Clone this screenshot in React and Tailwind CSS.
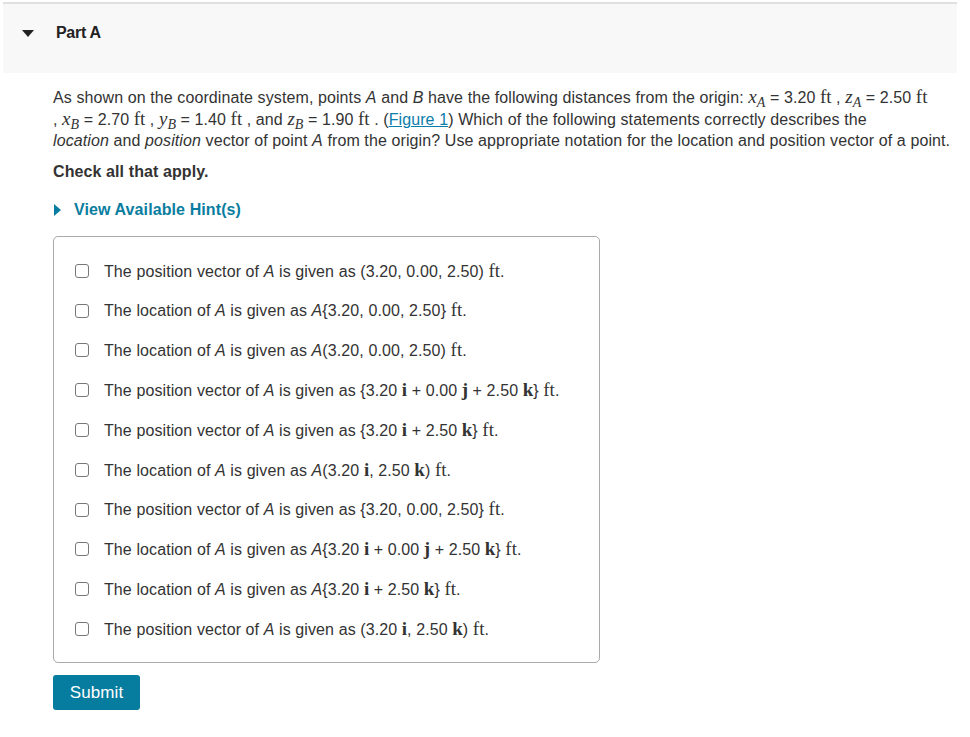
import React from 'react';

const Ft = () => <span className="font-['Liberation_Serif',serif] text-[19px] tracking-normal">ft</span>;
const V = ({ c }) => <span className="font-['Liberation_Serif',serif] font-bold text-[19px] tracking-normal">{c}</span>;
const Var = ({ v, s }) => (
  <span className="font-['Liberation_Serif',serif] italic text-[19px] tracking-normal">
    {v}<sub className="text-[14px] italic">{s}</sub>
  </span>
);

const options = [
  <>The position vector of <i>A</i> is given as (3.20, 0.00, 2.50) <Ft />.</>,
  <>The location of <i>A</i> is given as <i>A</i>{'{'}3.20, 0.00, 2.50{'}'} <Ft />.</>,
  <>The location of <i>A</i> is given as <i>A</i>(3.20, 0.00, 2.50) <Ft />.</>,
  <>The position vector of <i>A</i> is given as {'{'}3.20 <V c="i" /> + 0.00 <V c="j" /> + 2.50 <V c="k" />{'}'} <Ft />.</>,
  <>The position vector of <i>A</i> is given as {'{'}3.20 <V c="i" /> + 2.50 <V c="k" />{'}'} <Ft />.</>,
  <>The location of <i>A</i> is given as <i>A</i>(3.20 <V c="i" />, 2.50 <V c="k" />) <Ft />.</>,
  <>The position vector of <i>A</i> is given as {'{'}3.20, 0.00, 2.50{'}'} <Ft />.</>,
  <>The location of <i>A</i> is given as <i>A</i>{'{'}3.20 <V c="i" /> + 0.00 <V c="j" /> + 2.50 <V c="k" />{'}'} <Ft />.</>,
  <>The location of <i>A</i> is given as <i>A</i>{'{'}3.20 <V c="i" /> + 2.50 <V c="k" />{'}'} <Ft />.</>,
  <>The position vector of <i>A</i> is given as (3.20 <V c="i" />, 2.50 <V c="k" />) <Ft />.</>,
];

export default function App() {
  return (
    <div className="w-[970px] h-[737px] bg-white pl-[3px] pt-[2px] font-['Liberation_Sans',Arial,sans-serif] text-[#333]">
      <div className="w-[954px]">
        {/* header */}
        <div className="h-[71px] border-t-2 border-[#e0e0e0] bg-[#f8f8f8] flex items-center pb-[12px]">
          <svg width="12" height="7" viewBox="0 0 12 7" className="ml-[19px] mt-[1px]">
            <polygon points="0,0 12,0 6,7" fill="#222" />
          </svg>
          <span className="ml-[22px] text-[16px] font-bold text-[#222] tracking-[-0.3px]">Part A</span>
        </div>

        <div className="pl-[50px] pt-[13px] tracking-[0.1px]">
          <p className="text-[16px] leading-[21px] pr-[2px]">
            As shown on the coordinate system, points <i>A</i> and <i>B</i> have the following distances from the origin: <Var v="x" s="A" /> = 3.20 <Ft /> , <Var v="z" s="A" /> = 2.50 <Ft />
            <br />
            , <Var v="x" s="B" /> = 2.70 <Ft /> , <Var v="y" s="B" /> = 1.40 <Ft /> , and <Var v="z" s="B" /> = 1.90 <Ft /> . (<span className="text-[#0b7dab] underline">Figure 1</span>) Which of the following statements correctly describes the
            <br />
            <i>location</i> and <i>position</i> vector of point <i>A</i> from the origin? Use appropriate notation for the location and position vector of a point.
          </p>
          <p className="mt-[10px] text-[16px] font-bold leading-[21px]">Check all that apply.</p>
          <div className="mt-[16px] flex items-center text-[16px] font-bold text-[#097d9f]">
            <svg width="7" height="12" viewBox="0 0 7 12" className="ml-[1px]">
              <polygon points="0,0 7,6 0,12" fill="#097d9f" />
            </svg>
            <span className="ml-[13px]">View Available Hint(s)</span>
          </div>

          <div className="mt-[14px] w-[547px] h-[427px] border border-[#aaa] rounded-[5px] pt-[14px]">
            {options.map((o, i) => (
              <label key={i} className="flex items-center h-[39.8px] pl-[21px] text-[16px]">
                <span className="w-[14px] h-[14px] border border-[#777] rounded-[3px] bg-white shrink-0" />
                <span className="ml-[15px] whitespace-nowrap">{o}</span>
              </label>
            ))}
          </div>

          <button className="mt-[12px] w-[87px] h-[35px] rounded-[3px] bg-[#067c9e] text-white text-[17px] leading-none">
            Submit
          </button>
        </div>
      </div>
    </div>
  );
}
